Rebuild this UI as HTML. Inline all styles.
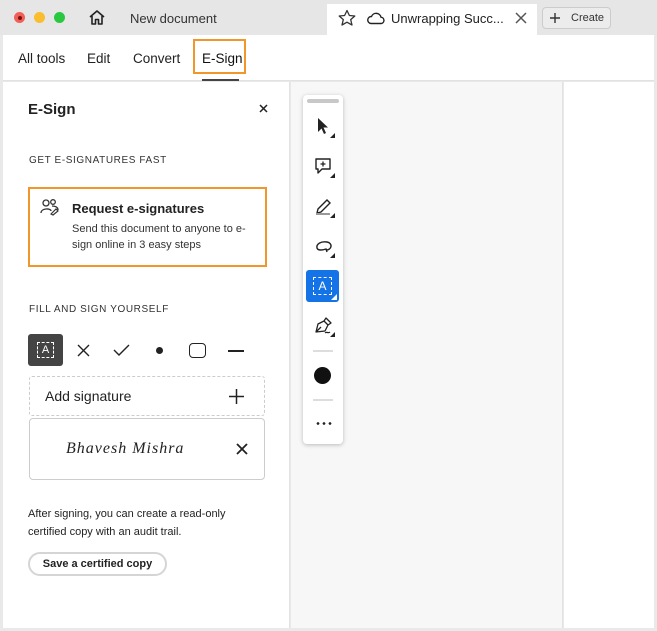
<!DOCTYPE html><html><head><style>
*{margin:0;padding:0;box-sizing:border-box}
body{width:657px;height:631px;overflow:hidden;font-family:"Liberation Sans",sans-serif;color:#222;background:#e9e9e9;position:relative}
.a{position:absolute}
.t{font-size:13px}
</style></head><body>
<div class="a" style="left:0;top:0;width:657px;height:35px;background:#e6e6e6"></div>
<div class="a" style="left:14px;top:12px;width:11px;height:11px;border-radius:50%;background:#f25f57"><div class="a" style="left:3.5px;top:3.5px;width:4px;height:4px;border-radius:50%;background:#7a1010"></div></div>
<div class="a" style="left:34px;top:12px;width:11px;height:11px;border-radius:50%;background:#f9bd2e"></div>
<div class="a" style="left:54px;top:12px;width:11px;height:11px;border-radius:50%;background:#29c840"></div>
<svg class="a" style="left:88px;top:9px" width="18" height="17" viewBox="0 0 18 17"><path d="M2 8 L9 2 L16 8 M4 7 V15 H7.5 V10.5 H10.5 V15 H14 V7" fill="none" stroke="#222" stroke-width="1.6" stroke-linejoin="round"/></svg>
<div class="a" style="left:130px;top:11px;font-size:13px;color:#333">New document</div>
<div class="a" style="left:327px;top:4px;width:210px;height:31px;background:#fff"></div>
<svg class="a" style="left:337px;top:9px" width="20" height="18" viewBox="0 0 20 18"><path d="M10 1.5 L12.4 6.5 L17.8 7 L13.7 10.6 L15 16 L10 13.2 L5 16 L6.3 10.6 L2.2 7 L7.6 6.5 Z" fill="none" stroke="#333" stroke-width="1.3" stroke-linejoin="round"/></svg>
<svg class="a" style="left:366px;top:11px" width="20" height="14" viewBox="0 0 20 14"><path d="M5 12.5 H15.5 A3.2 3.2 0 0 0 15 6.2 A5 5 0 0 0 5.5 5.5 A3.5 3.5 0 0 0 5 12.5 Z" fill="none" stroke="#222" stroke-width="1.4"/></svg>
<div class="a" style="left:391px;top:11px;font-size:13px;color:#222;white-space:nowrap">Unwrapping Succ...</div>
<svg class="a" style="left:515px;top:12px" width="12" height="12"><path d="M1 1 L11 11 M11 1 L1 11" stroke="#555" stroke-width="1.5"/></svg>
<div class="a" style="left:542px;top:7px;width:69px;height:22px;border:1px solid #ccc;border-radius:4px;background:#ececec"></div>
<svg class="a" style="left:549px;top:12px" width="12" height="12"><path d="M6 1 V11 M1 6 H11" stroke="#333" stroke-width="1.4"/></svg>
<div class="a" style="left:571px;top:12px;font-size:11px;color:#333">Create</div>
<div class="a" style="left:3px;top:35px;width:651px;height:46px;background:#fff;border-bottom:1px solid #e2e2e2"></div>
<div class="a" style="left:18px;top:51px;font-size:13.5px">All tools</div>
<div class="a" style="left:87px;top:51px;font-size:13.5px">Edit</div>
<div class="a" style="left:133px;top:51px;font-size:13.5px">Convert</div>
<div class="a" style="left:193px;top:39px;width:53px;height:35px;border:2px solid #f0962a"></div>
<div class="a" style="left:202px;top:51px;font-size:13.5px;color:#111">E-Sign</div>
<div class="a" style="left:202px;top:79px;width:37px;height:2px;background:#444"></div>
<div class="a" style="left:3px;top:82px;width:287px;height:546px;background:#fff;border-right:1px solid #e2e2e2"></div>
<div class="a" style="left:291px;top:82px;width:272px;height:546px;background:#f7f7f7;border-right:1px solid #e2e2e2"></div>
<div class="a" style="left:564px;top:82px;width:90px;height:546px;background:#fff"></div>
<div class="a" style="left:28px;top:101px;font-size:15px;font-weight:bold;color:#222">E-Sign</div>
<svg class="a" style="left:259px;top:104px" width="9" height="9"><path d="M1 1 L8 8 M8 1 L1 8" stroke="#222" stroke-width="1.5"/></svg>
<div class="a" style="left:29px;top:155px;font-size:10px;letter-spacing:.6px;color:#333">GET E-SIGNATURES FAST</div>
<div class="a" style="left:28px;top:187px;width:239px;height:80px;border:2.5px solid #f0962a"></div>
<svg class="a" style="left:40px;top:198px" width="20" height="18" viewBox="0 0 20 18"><circle cx="6" cy="5" r="3" fill="none" stroke="#333" stroke-width="1.3"/><circle cx="13" cy="4" r="2.3" fill="none" stroke="#333" stroke-width="1.3"/><path d="M1 15 C1 10 11 10 11 13 M12 8 C15 8 18 9 18 12" fill="none" stroke="#333" stroke-width="1.3"/><path d="M11 16 L16 11 L18 13 L13 17 Z" fill="none" stroke="#333" stroke-width="1.2"/></svg>
<div class="a" style="left:72px;top:201px;font-size:13px;font-weight:bold;color:#222">Request e-signatures</div>
<div class="a" style="left:72px;top:221px;font-size:11px;line-height:16px;color:#333;width:185px">Send this document to anyone to e-sign online in 3 easy steps</div>
<div class="a" style="left:29px;top:304px;font-size:10px;letter-spacing:.6px;color:#333">FILL AND SIGN YOURSELF</div>
<div class="a" style="left:28px;top:334px;width:35px;height:32px;background:#444;border-radius:3px"></div>
<div class="a" style="left:37px;top:342px;width:17px;height:16px;border:1.3px dashed #fff;color:#fff;font-size:11px;text-align:center;line-height:14px">A</div>
<svg class="a" style="left:77px;top:344px" width="13" height="13"><path d="M1 1 L12 12 M12 1 L1 12" stroke="#222" stroke-width="1.4"/></svg>
<svg class="a" style="left:113px;top:344px" width="17" height="12"><path d="M1 6 L6 11 L16 1" fill="none" stroke="#222" stroke-width="1.4"/></svg>
<div class="a" style="left:156px;top:347px;width:7px;height:7px;border-radius:50%;background:#222"></div>
<div class="a" style="left:189px;top:343px;width:17px;height:15px;border:1.5px solid #222;border-radius:4px"></div>
<div class="a" style="left:228px;top:350px;width:16px;height:1.5px;background:#222"></div>
<div class="a" style="left:29px;top:376px;width:236px;height:40px;border:1px dashed #ccc;border-radius:3px"></div>
<div class="a" style="left:45px;top:388px;font-size:14px;color:#222">Add signature</div>
<svg class="a" style="left:229px;top:389px" width="15" height="15"><path d="M7.5 0 V15 M0 7.5 H15" stroke="#222" stroke-width="1.5"/></svg>
<div class="a" style="left:29px;top:418px;width:236px;height:62px;border:1px solid #ccc;border-radius:4px"></div>
<div class="a" style="left:66px;top:440px;font-family:'Liberation Serif',serif;font-style:italic;font-size:16px;letter-spacing:1px;color:#222">Bhavesh Mishra</div>
<svg class="a" style="left:236px;top:443px" width="12" height="12"><path d="M1 1 L11 11 M11 1 L1 11" stroke="#222" stroke-width="1.8"/></svg>
<div class="a" style="left:28px;top:505px;font-size:11px;line-height:18px;color:#222;width:220px">After signing, you can create a read-only certified copy with an audit trail.</div>
<div class="a" style="left:28px;top:552px;width:139px;height:24px;border:2px solid #d5d5d5;border-radius:12px;font-size:11px;font-weight:bold;text-align:center;line-height:20px;color:#222">Save a certified copy</div>
<div class="a" style="left:303px;top:95px;width:40px;height:349px;background:#fff;border-radius:4px;box-shadow:0 1px 4px rgba(0,0,0,.25)"></div>
<div class="a" style="left:307px;top:99px;width:32px;height:4px;background:#c8c8c8;border-radius:2px"></div>
<svg class="a" style="left:316px;top:117px" width="20" height="22"><path d="M2 1 L2 15 L5.5 11.5 L8 17 L10 16 L7.5 10.5 L12 10.5 Z" fill="#222"/><path d="M19 16 L19 21 L14 21 Z" fill="#222"/></svg>
<svg class="a" style="left:314px;top:157px" width="22" height="22"><path d="M2 2 H16 V12 H8 L4 16 V12 H2 Z" fill="none" stroke="#222" stroke-width="1.4" stroke-linejoin="round"/><path d="M9 4.5 V9.5 M6.5 7 H11.5" stroke="#222" stroke-width="1.3"/><path d="M21 16 L21 21 L16 21 Z" fill="#222"/></svg>
<svg class="a" style="left:314px;top:197px" width="22" height="22"><path d="M3 16 L4 12 L13 3 L16 6 L7 15 Z" fill="none" stroke="#222" stroke-width="1.4"/><path d="M2 17 H16" stroke="#999" stroke-width="2"/><path d="M21 16 L21 21 L16 21 Z" fill="#222"/></svg>
<svg class="a" style="left:314px;top:237px" width="22" height="22"><path d="M12 13 C18 13 19 6 13 5 C7 4 2 7 3 11 C4 14 9 13 12 12 L13 15" fill="none" stroke="#222" stroke-width="1.4"/><path d="M21 16 L21 21 L16 21 Z" fill="#222"/></svg>
<div class="a" style="left:306px;top:270px;width:33px;height:32px;background:#1473e6;border-radius:3px"></div>
<div class="a" style="left:313px;top:277px;width:19px;height:18px;border:1.3px dashed #fff;color:#fff;font-size:12px;text-align:center;line-height:16px">A</div>
<svg class="a" style="left:331px;top:294px" width="6" height="6"><path d="M6 0 L6 6 L0 6 Z" fill="#fff"/></svg>
<svg class="a" style="left:313px;top:316px" width="23" height="22"><path d="M3 16 L5 8 L11 5 L15 9 L12 15 Z M11 5 L13 2 L18 7 L15 9 M3 16 L8 11" fill="none" stroke="#222" stroke-width="1.3" stroke-linejoin="round"/><path d="M12 17 C14 15 15 18 17 16" fill="none" stroke="#222" stroke-width="1.2"/><path d="M22 16 L22 21 L17 21 Z" fill="#222"/></svg>
<div class="a" style="left:313px;top:350px;width:20px;height:1.5px;background:#ddd"></div>
<div class="a" style="left:314px;top:367px;width:17px;height:17px;border-radius:50%;background:#111"></div>
<div class="a" style="left:313px;top:399px;width:20px;height:1.5px;background:#ddd"></div>
<div class="a" style="left:315px;top:422px;width:17px;height:3px;background:radial-gradient(circle,#222 1.2px,transparent 1.5px) 0 0/6px 3px"></div>
</body></html>
